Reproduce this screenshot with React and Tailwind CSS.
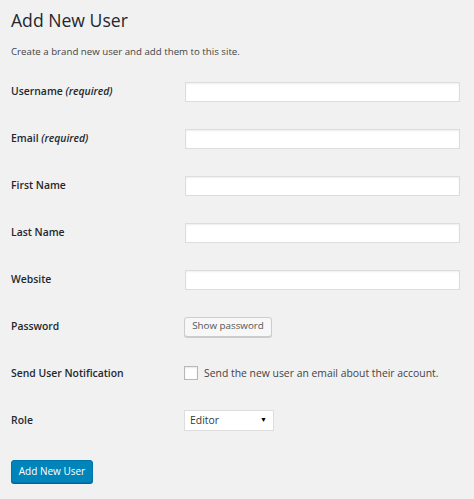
import React from 'react';

const font = { fontFamily: '"Open Sans", "Noto Sans", sans-serif' };

const TextRow = ({ label, required }) => (
  <div className="flex h-[47px] items-center">
    <label className="w-[174px] shrink-0 text-[10.4px] font-semibold text-[#23282d]">
      {label} {required && <em className="font-semibold">(required)</em>}
    </label>
    <input
      type="text"
      className="h-[20px] w-[275px] border border-[#ddd] bg-white shadow-[inset_0_1px_2px_rgba(0,0,0,0.07)] outline-none"
    />
  </div>
);

export default function App() {
  return (
    <div className="min-h-screen bg-[#f1f1f1] px-[11px]" style={font}>
      <h1 className="pt-[8px] text-[17.6px] leading-[24px] font-normal text-[#23282d]">Add New User</h1>
      <p className="mt-[12px] text-[9.7px] leading-[16px] text-[#444]">
        Create a brand new user and add them to this site.
      </p>

      <div className="mt-[8px]">
        <TextRow label="Username" required />
        <TextRow label="Email" required />
        <TextRow label="First Name" />
        <TextRow label="Last Name" />
        <TextRow label="Website" />

        <div className="flex h-[47px] items-center">
          <span className="w-[173px] shrink-0 text-[10.4px] font-semibold text-[#23282d]">Password</span>
          <button className="h-[20px] w-[88px] rounded-[3px] border border-[#ccc] bg-[#f7f7f7] text-[9.8px] text-[#555] shadow-[0_1px_0_#ccc]">
            Show password
          </button>
        </div>

        <div className="flex h-[47px] items-center">
          <span className="w-[173px] shrink-0 text-[10.4px] font-semibold text-[#23282d]">Send User Notification</span>
          <label className="flex items-center gap-[6px] text-[10.4px] text-[#444]">
            <span className="h-[14px] w-[14px] border border-[#b4b9be] bg-white shadow-[inset_0_1px_2px_rgba(0,0,0,0.1)]" />
            Send the new user an email about their account.
          </label>
        </div>

        <div className="flex h-[47px] items-center">
          <span className="w-[173px] shrink-0 text-[10.4px] font-semibold text-[#23282d]">Role</span>
          <div className="flex h-[21px] w-[90px] items-center justify-between border border-[#ddd] bg-white pl-[5px] pr-[6px] text-[10.4px] text-[#32373c]">
            <span>Editor</span>
            <span className="text-[7px] text-black">▼</span>
          </div>
        </div>
      </div>

      <button className="mt-[16px] h-[23px] w-[82px] rounded-[3px] border border-[#0073aa] bg-[#0085ba] text-[10px] text-white shadow-[0_1px_0_#006799]">
        Add New User
      </button>
    </div>
  );
}
